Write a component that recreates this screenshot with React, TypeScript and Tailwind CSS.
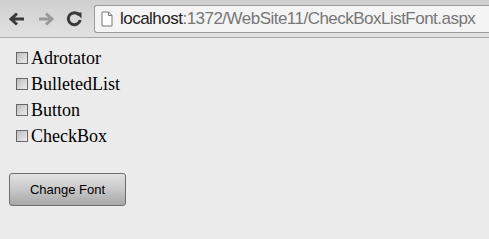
import React from "react";

function BackIcon({ color }: { color: string }) {
  return (
    <svg width="18" height="16" viewBox="0 0 18 16">
      <path d="M16 8H4M9 2.5 3 8l6 5.5" fill="none" stroke={color} strokeWidth="3" strokeLinejoin="miter" />
    </svg>
  );
}

function ForwardIcon({ color }: { color: string }) {
  return (
    <svg width="18" height="16" viewBox="0 0 18 16">
      <path d="M2 8h12M9 2.5 15 8l-6 5.5" fill="none" stroke={color} strokeWidth="3" />
    </svg>
  );
}

function ReloadIcon() {
  return (
    <svg width="17" height="17" viewBox="0 0 17 17">
      <path d="M13.2 5.2A6 6 0 1 0 14.2 10" fill="none" stroke="#3a3a3a" strokeWidth="3" />
      <path d="M9.5 2.5h6v6z" fill="#3a3a3a" />
    </svg>
  );
}

function PageIcon() {
  return (
    <svg width="12" height="16" viewBox="0 0 12 16">
      <path d="M1 1h6.5L11 4.5V15H1z" fill="#fff" stroke="#777" strokeWidth="1" />
      <path d="M7.5 1v3.5H11" fill="none" stroke="#777" strokeWidth="1" />
    </svg>
  );
}

const items = ["Adrotator", "BulletedList", "Button", "CheckBox"];

export default function App() {
  return (
    <div className="flex h-[239px] w-[489px] flex-col overflow-hidden bg-[#ebebeb]">
      <div className="flex h-[38px] shrink-0 items-center border-b border-[#a9a9a9] bg-gradient-to-b from-[#cfcfcf] to-[#e2e2e2] pl-[8px]">
        <div className="flex w-[86px] items-center">
          <div className="w-[29px]">
            <BackIcon color="#3b3b3b" />
          </div>
          <div className="w-[29px]">
            <ForwardIcon color="#9a9a9a" />
          </div>
          <ReloadIcon />
        </div>
        <div className="flex h-[28px] flex-1 items-center rounded-l-[3px] border border-r-0 border-[#9b9b9b] bg-[#f4f4f4] pl-[6px] font-['Liberation_Sans',sans-serif] text-[17px] tracking-[-0.52px]">
          <PageIcon />
          <span className="ml-[7px] whitespace-nowrap">
            <span className="text-[#222]">localhost</span>
            <span className="text-[#777]">:1372/WebSite11/CheckBoxListFont.aspx</span>
          </span>
        </div>
      </div>
      <div className="flex flex-col pl-[16px] pt-[7px] font-['Liberation_Serif',serif] text-[18px] text-black">
        {items.map((item) => (
          <label key={item} className="flex h-[26px] items-center">
            <span className="h-[12px] w-[12px] border border-[#666] bg-gradient-to-br from-[#bdbdbd] to-[#ededed]" />
            <span className="ml-[3px] leading-none">{item}</span>
          </label>
        ))}
      </div>
      <div className="pl-[9px] pt-[24px]">
        <button className="flex h-[33px] w-[117px] items-center justify-center rounded-[3px] border border-[#6e6e6e] bg-gradient-to-b from-[#e2e2e2] via-[#c8c8c8] to-[#a8a8a8] font-['Liberation_Sans',sans-serif] text-[13px] text-black">
          Change Font
        </button>
      </div>
    </div>
  );
}
